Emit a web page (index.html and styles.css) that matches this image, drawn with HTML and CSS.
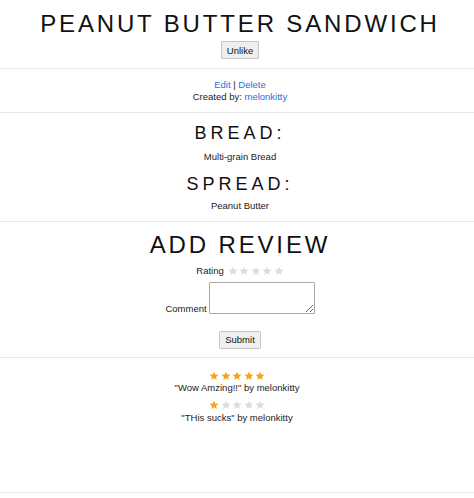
FILE: index.html
```html
<!DOCTYPE html>
<html lang="en">
<head>
    <meta charset="UTF-8">
    <title>Peanut Butter Sandwich</title>
    <link rel="stylesheet" href="styles.css">
</head>
<body>
    <div class="page">
        <div class="section top">
            <h1>Peanut Butter Sandwich</h1>
            <button class="btn">Unlike</button>
        </div>
        <div class="section meta">
            <div><a href="#">Edit</a> | <a href="#">Delete</a></div>
            <div>Created by: <a href="#">melonkitty</a></div>
        </div>
        <div class="section details">
            <h2>Bread:</h2>
            <p>Multi-grain Bread</p>
            <h2 class="spread">Spread:</h2>
            <p>Peanut Butter</p>
        </div>
        <div class="section add-review">
            <h1>Add Review</h1>
            <form class="review-form">
                <div class="rating-row">
                    <label>Rating</label>
                    <span class="stars empty">
                        <svg viewBox="0 0 24 24"><path d="M12 1.5l3.1 6.9 7.4.7-5.6 5 1.7 7.4L12 17.6l-6.6 3.9 1.7-7.4-5.6-5 7.4-.7z"/></svg>
                        <svg viewBox="0 0 24 24"><path d="M12 1.5l3.1 6.9 7.4.7-5.6 5 1.7 7.4L12 17.6l-6.6 3.9 1.7-7.4-5.6-5 7.4-.7z"/></svg>
                        <svg viewBox="0 0 24 24"><path d="M12 1.5l3.1 6.9 7.4.7-5.6 5 1.7 7.4L12 17.6l-6.6 3.9 1.7-7.4-5.6-5 7.4-.7z"/></svg>
                        <svg viewBox="0 0 24 24"><path d="M12 1.5l3.1 6.9 7.4.7-5.6 5 1.7 7.4L12 17.6l-6.6 3.9 1.7-7.4-5.6-5 7.4-.7z"/></svg>
                        <svg viewBox="0 0 24 24"><path d="M12 1.5l3.1 6.9 7.4.7-5.6 5 1.7 7.4L12 17.6l-6.6 3.9 1.7-7.4-5.6-5 7.4-.7z"/></svg>
                    </span>
                </div>
                <div class="comment-row">
                    <label for="comment">Comment</label>
                    <textarea id="comment"></textarea>
                </div>
                <button type="submit" class="btn submit">Submit</button>
            </form>
        </div>
        <div class="section reviews">
            <div class="review">
                <span class="stars">
                    <svg class="on" viewBox="0 0 24 24"><path d="M12 1.5l3.1 6.9 7.4.7-5.6 5 1.7 7.4L12 17.6l-6.6 3.9 1.7-7.4-5.6-5 7.4-.7z"/></svg>
                    <svg class="on" viewBox="0 0 24 24"><path d="M12 1.5l3.1 6.9 7.4.7-5.6 5 1.7 7.4L12 17.6l-6.6 3.9 1.7-7.4-5.6-5 7.4-.7z"/></svg>
                    <svg class="on" viewBox="0 0 24 24"><path d="M12 1.5l3.1 6.9 7.4.7-5.6 5 1.7 7.4L12 17.6l-6.6 3.9 1.7-7.4-5.6-5 7.4-.7z"/></svg>
                    <svg class="on" viewBox="0 0 24 24"><path d="M12 1.5l3.1 6.9 7.4.7-5.6 5 1.7 7.4L12 17.6l-6.6 3.9 1.7-7.4-5.6-5 7.4-.7z"/></svg>
                    <svg class="on" viewBox="0 0 24 24"><path d="M12 1.5l3.1 6.9 7.4.7-5.6 5 1.7 7.4L12 17.6l-6.6 3.9 1.7-7.4-5.6-5 7.4-.7z"/></svg>
                </span>
                <div class="review-text">"Wow Amzing!!" by melonkitty</div>
            </div>
            <div class="review">
                <span class="stars">
                    <svg class="on" viewBox="0 0 24 24"><path d="M12 1.5l3.1 6.9 7.4.7-5.6 5 1.7 7.4L12 17.6l-6.6 3.9 1.7-7.4-5.6-5 7.4-.7z"/></svg>
                    <svg viewBox="0 0 24 24"><path d="M12 1.5l3.1 6.9 7.4.7-5.6 5 1.7 7.4L12 17.6l-6.6 3.9 1.7-7.4-5.6-5 7.4-.7z"/></svg>
                    <svg viewBox="0 0 24 24"><path d="M12 1.5l3.1 6.9 7.4.7-5.6 5 1.7 7.4L12 17.6l-6.6 3.9 1.7-7.4-5.6-5 7.4-.7z"/></svg>
                    <svg viewBox="0 0 24 24"><path d="M12 1.5l3.1 6.9 7.4.7-5.6 5 1.7 7.4L12 17.6l-6.6 3.9 1.7-7.4-5.6-5 7.4-.7z"/></svg>
                    <svg viewBox="0 0 24 24"><path d="M12 1.5l3.1 6.9 7.4.7-5.6 5 1.7 7.4L12 17.6l-6.6 3.9 1.7-7.4-5.6-5 7.4-.7z"/></svg>
                </span>
                <div class="review-text">"THis sucks" by melonkitty</div>
            </div>
        </div>
    </div>
</body>
</html>
```

FILE: styles.css
```css
* {
    box-sizing: border-box;
    margin: 0;
    padding: 0;
}
body {
    font-family: 'Liberation Sans', Arial, sans-serif;
    font-size: 9.5px;
    line-height: 11.5px;
    color: #222;
    background-color: #ffffff;
}
.page {
    text-align: center;
}
.section {
    border-bottom: 1px solid #e8e8e8;
    padding-left: 6px;
}
h1 {
    font-size: 24px;
    line-height: 28px;
    font-weight: 400;
    letter-spacing: 2.85px;
    text-transform: uppercase;
    color: #111;
}
h2 {
    font-size: 18px;
    line-height: 22px;
    font-weight: 400;
    letter-spacing: 4px;
    text-transform: uppercase;
    color: #111;
}
a {
    color: #2472d9;
    text-decoration: none;
}
.btn {
    font-family: inherit;
    font-size: 9.5px;
    color: #111;
    height: 18px;
    padding: 0 5px;
    background-color: #efefef;
    border: 1px solid #c4c4c4;
    border-radius: 1px;
}
.top {
    padding-top: 10px;
    padding-bottom: 9px;
}
.top .btn {
    margin-top: 3px;
}
.meta {
    padding-top: 10px;
    padding-bottom: 10px;
}
.details {
    padding-top: 9px;
    padding-bottom: 10px;
}
.details p {
    margin-top: 7px;
}
.details .spread {
    margin-top: 10px;
}
.details p + h2 + p {
    margin-top: 5px;
}
.add-review {
    padding-top: 9px;
    padding-bottom: 8px;
}
.review-form {
    display: flex;
    flex-direction: column;
    align-items: center;
}
.rating-row {
    display: flex;
    align-items: center;
    gap: 4px;
    margin-top: 6px;
}
.comment-row {
    display: flex;
    align-items: flex-end;
    gap: 2px;
    margin-top: 5px;
}
.comment-row label {
    line-height: 10px;
}
textarea {
    width: 106px;
    height: 32px;
    border: 1px solid #aaa;
    border-radius: 1px;
    font-family: inherit;
}
.submit {
    margin-top: 17px;
}
.stars {
    display: inline-flex;
    gap: 1.5px;
    vertical-align: middle;
}
.stars svg {
    width: 10px;
    height: 10px;
    fill: #dcdcdc;
}
.stars svg.on {
    fill: #f2a51a;
}
.reviews {
    height: 135px;
    padding-top: 12px;
    padding-left: 0;
}
.review + .review {
    margin-top: 5px;
}
.review .stars {
    height: 11px;
    align-items: center;
}
.review-text {
    margin-top: 1px;
}
```
